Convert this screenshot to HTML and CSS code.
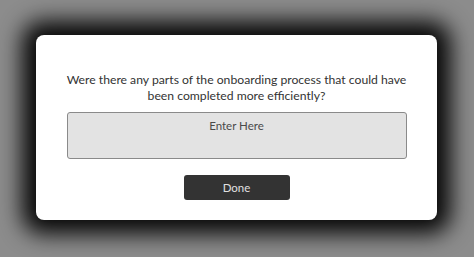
FILE: index.html
```html
<!DOCTYPE html>
<html lang="en">
<head>
    <meta charset="UTF-8">
    <meta name="viewport" content="width=device-width, initial-scale=1.0">
    <title>Feedback</title>
    <link rel="stylesheet" href="styles.css">
</head>
<body>
    <div class="card">
        <p class="question">Were there any parts of the onboarding process that could have been completed more efficiently?</p>
        <textarea class="answer" placeholder="Enter Here"></textarea>
        <button class="done" type="button">Done</button>
    </div>
</body>
</html>
```

FILE: styles.css
```css
body {
    margin: 0;
    height: 257px;
    overflow: hidden;
    background-color: #8c8c8c;
    font-family: Lato, "Open Sans", sans-serif;
    padding: 35px 0 0 36px;
    box-sizing: border-box;
}
.card {
    width: 401px;
    height: 185px;
    background: #fff;
    border-radius: 8px;
    box-shadow: 0 0 22px 14px rgba(0, 0, 0, 0.95);
    display: flex;
    flex-direction: column;
    align-items: center;
    padding-top: 37px;
    box-sizing: border-box;
}
.question {
    margin: 0;
    width: 350px;
    text-align: center;
    font-size: 12.2px;
    line-height: 16px;
    color: #333;
}
.answer {
    margin-top: 8px;
    width: 340px;
    height: 47px;
    box-sizing: border-box;
    background: #e3e3e3;
    border: 1px solid #8a8a8a;
    border-radius: 3px;
    resize: none;
    text-align: center;
    font-family: Lato, "Open Sans", sans-serif;
    font-size: 11.5px;
    padding-top: 6px;
}
.answer::placeholder {
    color: #4a4a4a;
}
.done {
    margin-top: 16px;
    width: 106px;
    height: 25px;
    background: #333;
    color: #e0e0e0;
    border: none;
    border-radius: 3px;
    font-family: Lato, "Open Sans", sans-serif;
    font-size: 11.5px;
}
```
